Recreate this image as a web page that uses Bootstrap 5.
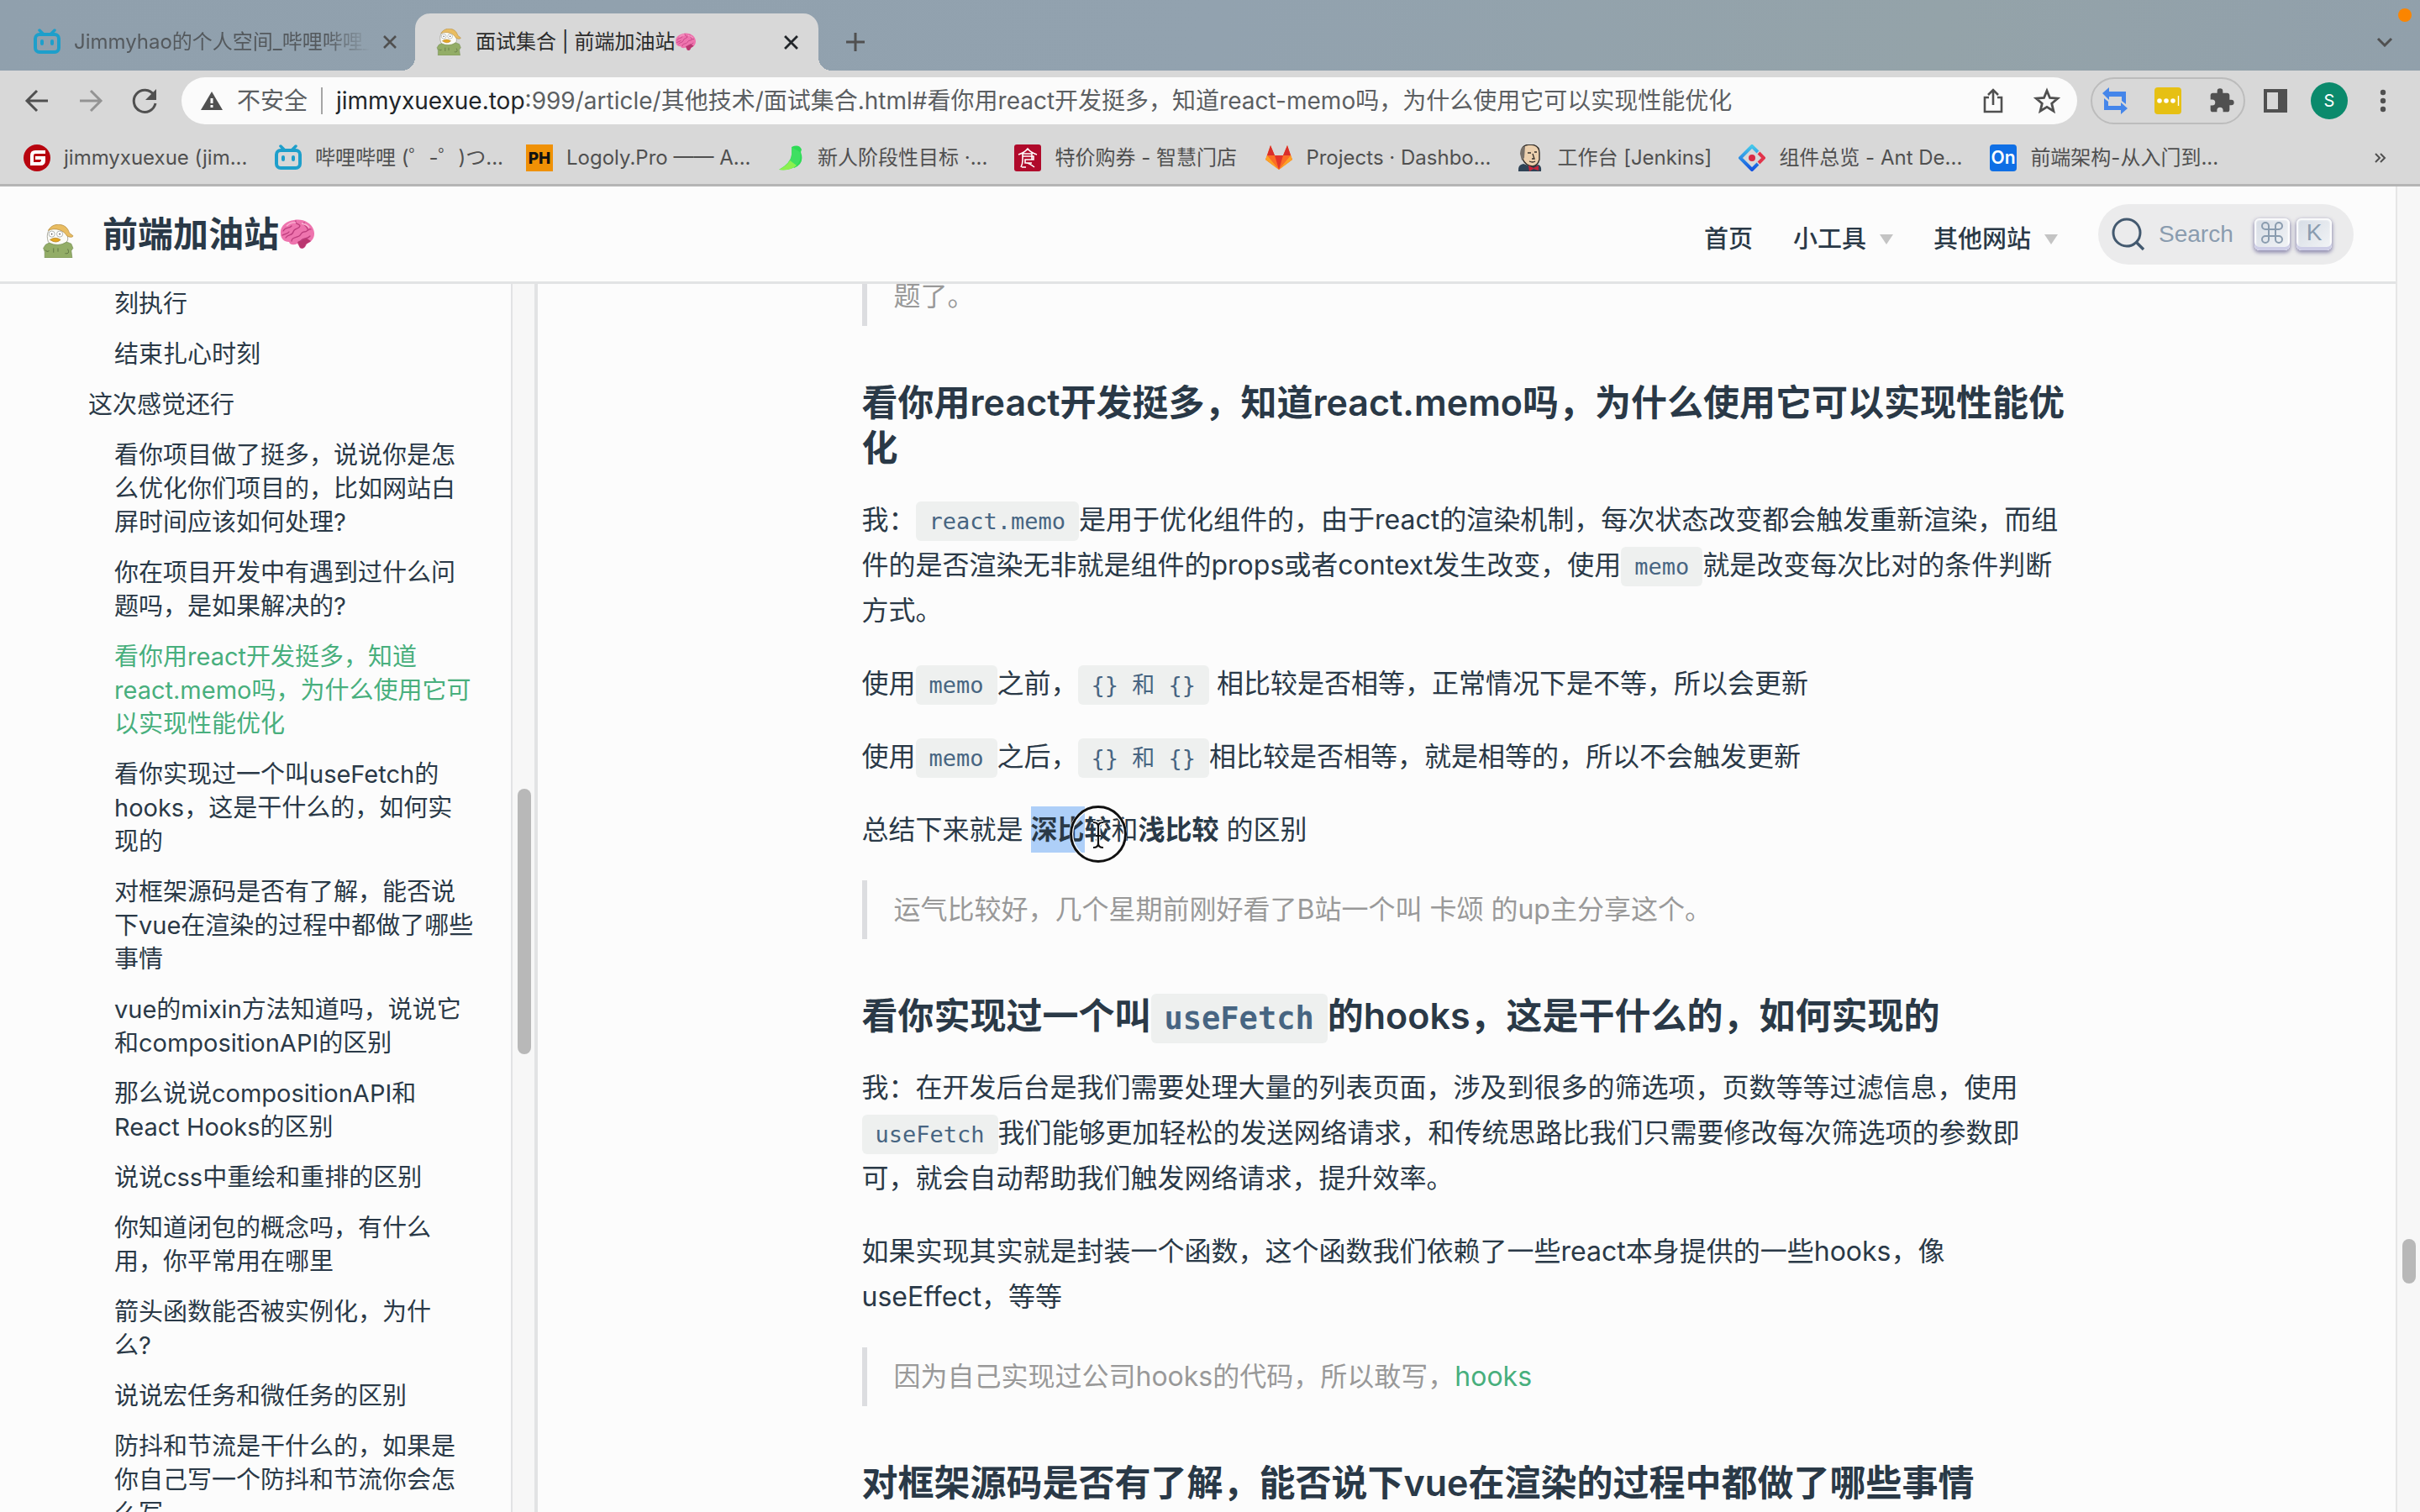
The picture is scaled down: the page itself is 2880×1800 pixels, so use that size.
<!DOCTYPE html>
<html lang="zh-CN">
<head>
<meta charset="utf-8">
<meta name="viewport" content="width=device-width, initial-scale=1">
<title>面试集合 | 前端加油站</title>
<link rel="stylesheet" href="https://cdn.jsdelivr.net/npm/bootstrap@5.3.0/dist/css/bootstrap.min.css">
<style>
  :root { --ink: #2a3947; --chrome: #d8d8d8; --glyph: #505050; --accent: #48af7d; --paper: #fcfcfc; --line: #e2e3e4; }
  body { font-family: Inter, "Noto Sans CJK SC", sans-serif; color: var(--ink); background: var(--paper); font-size: 32px; line-height: 54px; }
  svg { display: block; flex: none; }
  button { border: 0; background: none; padding: 0; color: var(--glyph); display: block; flex: none; }
  a { color: inherit; text-decoration: none; }

  /* tab strip */
  .strip { height: 84px; background: linear-gradient(100deg, #90a0ad, #92a2af 50%, #94a3a9 80%, #91a0ab); font-size: 24px; line-height: 32px; color: #54595d; position: relative; }
  .tab-item { height: 68px; }
  .tab-idle { width: 494px; padding: 0 22px 0 40px; }
  .tab-open { width: 480px; padding: 0 24px 0 24px; background: var(--chrome); color: #2b2b2b; border-radius: 18px 18px 0 0; position: relative; }
  .tab-open::before, .tab-open::after { content: ""; position: absolute; bottom: 0; width: 16px; height: 16px; }
  .tab-open::before { right: 100%; background: radial-gradient(circle at 0 0, transparent 16px, var(--chrome) 16px); }
  .tab-open::after { left: 100%; background: radial-gradient(circle at 100% 0, transparent 16px, var(--chrome) 16px); }
  .tab-name { overflow: hidden; white-space: nowrap; }
  .tab-fade { mask-image: linear-gradient(90deg, #000 85%, transparent); -webkit-mask-image: linear-gradient(90deg, #000 85%, transparent); }
  .rec-dot { position: absolute; right: 10px; top: 10px; width: 16px; height: 16px; background: #fb8500; border-radius: 50%; }

  /* toolbar */
  .toolbar { background: var(--chrome); padding: 8px 30px 8px 24px; color: var(--glyph); }
  .omnibox { height: 56px; border-radius: 28px; background: #fbfbfb; padding: 0 20px 0 22px; font-size: 28px; line-height: 36px; color: #5c5f62; }
  .omnibox input { border: 0; background: none; padding: 0; outline: 0; color: inherit; min-width: 0; }
  .omni-rule { width: 2px; height: 32px; background: #a5a5a5; }
  .ext-pill { height: 56px; width: 184px; border: 2px solid #bcbcbc; border-radius: 28px; padding: 0 10px 0 12px; margin-right: 22px; }
  .face { width: 44px; height: 44px; margin: 0 28px; border-radius: 50%; background: #0b8a6c; color: #fff; font-size: 20px; line-height: 44px; }
  .marks { background: var(--chrome); border-bottom: 3px solid #b5b5b5; padding: 16px 24px 15px 28px; font-size: 24px; line-height: 32px; color: #505050; }
  .marks li { white-space: nowrap; }
  .mark-wide { width: 267px; }

  /* site header */
  .site-head { height: 116px; border-bottom: 3px solid var(--line); padding: 0 50px 0 48px; }
  .site-name { font-size: 42px; line-height: 54px; font-weight: 600; }
  .nav-text { font-size: 29px; line-height: 40px; font-weight: 500; padding-top: 12px; }
  .caret-down { width: 0; height: 0; border: 8px solid transparent; border-top: 12px solid #c4c4c4; border-bottom: 0; }
  .finder { width: 304px; height: 72px; border-radius: 36px; background: #ebebec; padding: 0 24px 0 16px; }
  .finder input { width: 98px; border: 0; background: none; padding: 0; outline: 0; font: 28px/36px "Liberation Sans", sans-serif; }
  .finder input::placeholder { color: #8a9caf; opacity: 1; }
  .keycap { width: 42px; height: 38px; border-radius: 6px; background: linear-gradient(135deg, #d5dbe4, #f3f5f7); box-shadow: inset 0 -4px 0 #cdcde6, inset 0 0 2px 2px #fff, 0 2px 4px 1px rgba(90, 85, 140, .6); color: #8a9caf; font: 28px/34px "Liberation Sans", "DejaVu Sans", sans-serif; text-align: center; }

  /* sidebar */
  .side-list { width: 608px; padding: 4px 46px 0 136px; font-size: 29px; line-height: 40px; overflow: hidden; }
  .side-list ul { display: flex; flex-direction: column; gap: 20px; margin: 0; padding: 0; list-style: none; }
  .side-list .group-title { margin-left: -31px; }
  .side-list .current { color: var(--accent); }
  .side-list li { white-space: nowrap; }
  .track { position: relative; background: #f7f7f7; flex: none; }
  .track-side { width: 32px; border-left: 2px solid var(--line); border-right: 4px solid var(--line); }
  .track-page { width: 29px; border-left: 2px solid #e6e6e6; }
  .thumb { position: absolute; left: 6px; width: 16px; border-radius: 8px; background: #b8b8b8; }

  /* article */
  .column-main { overflow: hidden; }
  .article { max-width: 1440px; margin: -20px auto 0; white-space: nowrap; }
  .article p { margin: 0 0 33px; }
  .article h3 { font-size: 43px; line-height: 54px; font-weight: 600; margin: 64px 0 32px; }
  .article blockquote { margin: 0 0 32px; padding: 8px 0 8px 32px; border-left: 6px solid #dcdde0; color: #999; }
  .article blockquote a { color: var(--accent); }
  .article code { font-family: "DejaVu Sans Mono", "Noto Sans CJK SC", monospace; font-size: 27px; line-height: 1; padding: 8px 16px; background: #eef0ef; border-radius: 6px; color: #476582; }
  .article h3 code { font-size: 37px; }
  .picked { background: #aecff8; padding: 8px 0; }
  .pointer-anchor { position: relative; }
  .pointer-ring { position: absolute; left: -18px; top: -10px; }
</style>
</head>
<body class="vh-100 overflow-hidden d-flex flex-column">

<svg width="0" height="0" class="position-absolute" aria-hidden="true">
  <symbol id="duck" viewBox="0 0 34 38">
    <path d="M6 20C3 11 6 3 15 3s14 8 13 15c-3 7-18 8-22 2z" fill="#fbfbf6" stroke="#8e8e80" stroke-width=".7"/>
    <path d="M2 38V31L0.500 27 3 23 7 21q10 5 20-1l5 2 2 5-2 3 1 8z" fill="#93ad67" stroke="#6f8750" stroke-width=".6"/>
    <path d="M6 7C9 1 16-1 22 1c6 2 7 7 8 9l4 3c0 2-4 2-7 0C24 7 14 3 6 7z" fill="#e9bd62" stroke="#b28a3c" stroke-width=".7"/>
    <circle cx="10" cy="11" r="3.400" fill="#fff" stroke="#a3a8a6" stroke-width=".8"/><circle cx="19" cy="11" r="3.400" fill="#fff" stroke="#a3a8a6" stroke-width=".8"/>
    <circle cx="10" cy="11" r=".8" fill="#444"/><circle cx="19" cy="11" r=".8" fill="#444"/>
    <path d="M8 17.500q6-4 12 0-5 5-12 0z" fill="#e5a823" stroke="#a9761a" stroke-width=".6"/>
    <path d="M12 27v5m5-5v4m11-3q3 6-3 5M3 29q1 3 4 1" fill="none" stroke="#5f7443" stroke-width=".9"/>
  </symbol>
  <symbol id="brain" viewBox="0 0 42 36">
    <path d="M2 17C1 8 9 2 18 1c10-2 20 3 23 11 3 8-1 15-8 17-1 4-4 7-8 5l-3-5c-4 2-9 2-10-2C6 27 2 23 2 17z" fill="#ee74ae"/>
    <path d="M22 27l10-5 6 4-6 4c-1 4-4 6-7 4z" fill="#b9366f"/>
    <path d="M5 14c4-6 7-2 10-6M8 22c3-5 8-2 9-7s7-3 8-7M15 26c0-5 6-4 9-6s2-5 6-5 5-4 8-3M20 2c-2 4 5 3 5 6M30 4c-2 3 4 4 4 8M4 19c3-2 6-1 8-4M26 26c2-4 8-2 11-6" fill="none" stroke="#bd3d7d" stroke-width="1.300" stroke-linecap="round"/>
    <path d="M9 8q5-5 11-4M27 5q6 1 9 5" fill="none" stroke="#fbb3d3" stroke-width="1.400"/>
  </symbol>
  <symbol id="tv" viewBox="0 0 32 32">
    <path d="M7 2l5 5M25 2l-5 5" stroke="#1e9fcb" stroke-width="3.500" stroke-linecap="round"/>
    <rect x="2" y="7" width="28" height="21" rx="5" fill="none" stroke="#1e9fcb" stroke-width="4"/>
    <path d="M10 15v3M22 15v3" stroke="#1e9fcb" stroke-width="4" stroke-linecap="round"/>
  </symbol>
  <symbol id="cross" viewBox="0 0 16 16"><path d="M1 1l14 14M15 1L1 15" stroke="currentColor" stroke-width="2.600"/></symbol>
</svg>

<div class="strip d-flex align-items-end flex-shrink-0">
  <div class="tab-item tab-idle d-flex align-items-center">
    <svg width="32" height="32"><use href="#tv"/></svg>
    <span class="tab-name tab-fade flex-grow-1 ms-3 me-3">Jimmyhao的个人空间_哔哩哔哩_</span>
    <button type="button" aria-label="关闭标签页"><svg width="16" height="16"><use href="#cross"/></svg></button>
  </div>
  <div class="tab-item tab-open d-flex align-items-center">
    <svg width="32" height="32"><use href="#duck"/></svg>
    <span class="tab-name flex-grow-1 ms-3 d-flex align-items-center">面试集合 | 前端加油站<svg width="25" height="22"><use href="#brain"/></svg></span>
    <button type="button" aria-label="关闭标签页" class="text-dark"><svg width="17" height="17"><use href="#cross"/></svg></button>
  </div>
  <div class="tab-item d-flex align-items-center flex-grow-1 justify-content-between ps-4 pe-4">
    <button type="button" aria-label="新标签页" class="ms-2"><svg width="24" height="24" viewBox="0 0 24 24"><path d="M12 1v22M1 12h22" stroke="currentColor" stroke-width="3"/></svg></button>
    <button type="button" aria-label="搜索标签页" class="me-2"><svg width="20" height="12" viewBox="0 0 20 12"><path d="M2 2l8 8 8-8" fill="none" stroke="currentColor" stroke-width="3"/></svg></button>
  </div>
  <span class="rec-dot"></span>
</div>

<div class="toolbar d-flex align-items-center flex-shrink-0">
  <div class="d-flex align-items-center gap-4 pe-4">
    <button type="button" aria-label="后退"><svg width="40" height="40" viewBox="0 0 40 40"><path d="M33 20H9M20 8L8 20l12 12" fill="none" stroke="currentColor" stroke-width="3"/></svg></button>
    <button type="button" aria-label="前进" class="opacity-50"><svg width="40" height="40" viewBox="0 0 40 40"><path d="M7 20h24M20 8l12 12-12 12" fill="none" stroke="currentColor" stroke-width="3"/></svg></button>
    <button type="button" aria-label="重新加载"><svg width="40" height="40" viewBox="0 0 40 40"><path d="M31 13a13 13 0 1 0 2 10" fill="none" stroke="currentColor" stroke-width="3"/><path d="M34 6v13H21z" fill="currentColor"/></svg></button>
  </div>
  <div class="omnibox d-flex align-items-center flex-grow-1">
    <svg width="28" height="24" viewBox="0 0 28 24"><path d="M14 1l13 22H1z" fill="#505050"/><path d="M14 9v6M14 17v3" stroke="#fff" stroke-width="3"/></svg>
    <span class="ms-3">不安全</span>
    <span class="omni-rule mx-3"></span>
    <label for="address" class="text-dark">jimmyxuexue.top</label>
    <input id="address" class="flex-grow-1" type="text" value=":999/article/其他技术/面试集合.html#看你用react开发挺多，知道react-memo吗，为什么使用它可以实现性能优化">
    <button type="button" aria-label="分享"><svg width="32" height="32" viewBox="0 0 32 32"><path d="M11 12H6v17h20V12h-5M16 21V4M10 9l6-6 6 6" fill="none" stroke="currentColor" stroke-width="2.600"/></svg></button>
    <button type="button" aria-label="收藏" class="ms-4 ps-2"><svg width="32" height="32" viewBox="0 0 32 32"><path d="M16 4l3.500 8.500 9.200.7-7 6 2.200 9L16 23.400 8.100 28.200l2.200-9-7-6 9.200-.7z" fill="none" stroke="currentColor" stroke-width="2.800"/></svg></button>
  </div>
  <div class="ext-pill d-flex align-items-center justify-content-between ms-3">
    <button type="button" aria-label="同步扩展"><svg width="30" height="32" viewBox="0 0 30 32"><path d="M0 7l8-7v5h20v15l-5-4v-5H8v4zM30 25l-8 7v-5H2V13l5 4v5h15v-4z" fill="#4586ea"/></svg></button>
    <button type="button" aria-label="输入扩展"><svg width="32" height="32" viewBox="0 0 32 32"><rect width="32" height="32" rx="4" fill="#e6c013"/><circle cx="6" cy="16" r="2.800" fill="#fff"/><circle cx="14" cy="16" r="2.800" fill="#fff"/><circle cx="22" cy="16" r="2.800" fill="#fff"/><path d="M28.500 10v12" stroke="#fff" stroke-width="1.400"/></svg></button>
    <button type="button" aria-label="扩展程序"><svg width="32" height="32" viewBox="0 0 24 24"><path d="M20.500 11H19V7c0-1.100-.9-2-2-2h-4V3.500a2.500 2.500 0 0 0-5 0V5H4c-1.100 0-2 .9-2 2v3.800h1.500a2.700 2.700 0 0 1 0 5.400H2V20c0 1.100.9 2 2 2h3.800v-1.500a2.700 2.700 0 0 1 5.400 0V22H17c1.100 0 2-.9 2-2v-4h1.500a2.500 2.500 0 0 0 0-5z" fill="currentColor"/></svg></button>
  </div>
  <button type="button" aria-label="侧边栏"><svg width="28" height="28" viewBox="0 0 28 28"><path d="M0 0h28v28H0zM4 4v20h13V4z" fill="currentColor" fill-rule="evenodd"/></svg></button>
  <button type="button" aria-label="个人资料" class="face">S</button>
  <button type="button" aria-label="菜单" class="ms-2 me-2"><svg width="12" height="30" viewBox="0 0 12 30"><g fill="currentColor"><circle cx="6" cy="5" r="3.200"/><circle cx="6" cy="15" r="3.200"/><circle cx="6" cy="25" r="3.200"/></g></svg></button>
</div>

<nav class="marks d-flex align-items-center justify-content-between flex-shrink-0" aria-label="书签">
  <ul class="list-unstyled d-flex mb-0 gap-4 p-0">
    <li class="me-2"><a href="#" class="d-flex gap-3 mark-wide"><svg width="32" height="32" viewBox="0 0 32 32"><circle cx="16" cy="16" r="16" fill="#b8040f"/><path d="M26 7H14q-6 0-6 6v12h12q6 0 6-6v-5H14v4h7q0 3-2 3h-7v-8q0-2 2-2h12z" fill="#fff"/></svg>jimmyxuexue (jim...</a></li>
    <li class="me-2"><a href="#" class="d-flex gap-3 mark-wide"><svg width="32" height="32"><use href="#tv"/></svg>哔哩哔哩 (゜-゜)つ...</a></li>
    <li class="me-2"><a href="#" class="d-flex gap-3 mark-wide"><svg width="32" height="32" viewBox="0 0 32 32"><rect width="32" height="32" fill="#f09106"/><text x="16" y="23" font-size="19" font-weight="800" text-anchor="middle" fill="#111" font-family="Inter, sans-serif">PH</text></svg>Logoly.Pro —— A...</a></li>
    <li class="me-2"><a href="#" class="d-flex gap-3"><svg width="32" height="32" viewBox="0 0 32 32"><path d="M17 3q9-4 12 3l-1 3q5 14-8 19z" fill="#2ddb55"/><path d="M17 3v9Q16 22 2 30q14 1 20-4 8-8 5-17z" fill="#3fdf62"/><path d="M2 30q10-5 13-11l8 6q-8 7-21 5z" fill="#8df04e"/></svg>新人阶段性目标 ·...</a></li>
    <li class="me-2"><a href="#" class="d-flex gap-3 mark-wide"><svg width="32" height="32" viewBox="0 0 32 32"><rect width="32" height="32" rx="3" fill="#b00a2b"/><path d="M5 12q7-2 11-7 4 5 11 7M10 11h11v7M10 14h13v4H13v4h8M10 11v8q0 4-2 8M14 22q4 0 10 5M9 27h5" fill="none" stroke="#fff" stroke-width="1.600"/></svg>特价购券 - 智慧门店</a></li>
    <li class="me-2"><a href="#" class="d-flex gap-3 mark-wide"><svg width="32" height="32" viewBox="0 0 32 32"><path d="M16 30L0 18 6 1l5 12h10l5-12 6 17z" fill="#fb6d26"/><path d="M16 30L11 13h10z" fill="#e3342a"/><path d="M6 1l5 12H2zM26 1l-5 12h9z" fill="#d92e2b"/><path d="M2 13L0 18l16 12zM30 13l2 5-16 12z" fill="#fca326"/></svg>Projects · Dashbo...</a></li>
    <li class="me-2"><a href="#" class="d-flex gap-3"><svg width="32" height="32" viewBox="0 0 32 32"><path d="M2 32q-1-8 6-9l8 3 10-2q4 2 3 8z" fill="#2f4356"/><path d="M6 12Q4 1 15 0q12 0 12 10v8q-2 7-8 8-9-1-12-9z" fill="#ecd0ae" stroke="#332e29" stroke-width="1.400"/><path d="M4 11Q4 3 10 2l-1 14-3 3z" fill="#777069"/><path d="M13 10h4M21 9h3M19 11l2 6h-3M15 20q4 2 7 0" fill="none" stroke="#332e29" stroke-width="1.300"/><path d="M14 25l6 3 6-3v6l-6-2-5 3z" fill="#c8253a"/></svg>工作台 [Jenkins]</a></li>
    <li class="me-2"><a href="#" class="d-flex gap-3 mark-wide"><svg width="32" height="32" viewBox="0 0 32 32"><defs><linearGradient id="ant" x2="0" y2="1"><stop stop-color="#45c8ea"/><stop offset="1" stop-color="#1454e0"/></linearGradient></defs><path d="M23 9l-7-7L2 16l14 14 7-7" fill="none" stroke="url(#ant)" stroke-width="4"/><path d="M24 10l6 6-6 6" fill="none" stroke="#e2344b" stroke-width="4"/><circle cx="16" cy="16" r="4" fill="#d92a45"/></svg>组件总览 - Ant De...</a></li>
    <li><a href="#" class="d-flex gap-3 mark-wide"><svg width="32" height="32" viewBox="0 0 32 32"><rect width="32" height="32" rx="4" fill="#0f6fe5"/><text x="16" y="23" font-size="21" font-weight="600" text-anchor="middle" fill="#fff" font-family="Inter, sans-serif">On</text></svg>前端架构-从入门到...</a></li>
  </ul>
  <button type="button" aria-label="更多书签" class="me-3"><svg width="14" height="12" viewBox="0 0 14 12"><path d="M1 1l5 5-5 5M7 1l5 5-5 5" fill="none" stroke="currentColor" stroke-width="2"/></svg></button>
</nav>

<div class="d-flex flex-grow-1 overflow-hidden">
  <div class="d-flex flex-column flex-grow-1 overflow-hidden">
    <header class="site-head d-flex align-items-center flex-shrink-0">
      <a href="#" class="d-flex align-items-center">
        <svg width="42" height="40" class="mt-3"><use href="#duck"/></svg>
        <span class="site-name d-flex align-items-center ps-3 ms-3">前端加油站<svg width="42" height="36"><use href="#brain"/></svg></span>
      </a>
      <nav class="nav-text d-flex align-items-center ms-auto gap-5 me-5">
        <a href="#">首页</a>
        <a href="#" class="d-flex align-items-center gap-3">小工具<span class="caret-down"></span></a>
        <a href="#" class="d-flex align-items-center gap-3">其他网站<span class="caret-down"></span></a>
      </nav>
      <div class="finder d-flex align-items-center">
        <label for="site-search"><svg width="40" height="40" viewBox="0 0 40 40"><circle cx="18" cy="18" r="16" fill="none" stroke="#43596f" stroke-width="3"/><path d="M29 29l9 9" stroke="#43596f" stroke-width="3.400"/></svg></label>
        <input id="site-search" type="text" placeholder="Search" class="ms-3 me-3">
        <kbd class="keycap p-0 me-2"><svg width="42" height="34" viewBox="0 0 42 34"><path d="M17 13h8v8h-8zM17 13h-4a4 4 0 1 1 4-4zM25 13V9a4 4 0 1 1 4 4zM25 21h4a4 4 0 1 1-4 4zM17 21v4a4 4 0 1 1-4-4z" fill="none" stroke="#8a9caf" stroke-width="2"/></svg></kbd><kbd class="keycap p-0">K</kbd>
      </div>
    </header>

    <div class="d-flex flex-grow-1 overflow-hidden">
      <aside class="side-list flex-shrink-0">
        <ul>
          <li><a href="#">刻执行</a></li>
          <li><a href="#">结束扎心时刻</a></li>
          <li class="group-title"><a href="#">这次感觉还行</a></li>
          <li><a href="#">看你项目做了挺多，说说你是怎<br>么优化你们项目的，比如网站白<br>屏时间应该如何处理?</a></li>
          <li><a href="#">你在项目开发中有遇到过什么问<br>题吗，是如果解决的?</a></li>
          <li><a href="#" class="current">看你用react开发挺多，知道<br>react.memo吗，为什么使用它可<br>以实现性能优化</a></li>
          <li><a href="#">看你实现过一个叫useFetch的<br>hooks，这是干什么的，如何实<br>现的</a></li>
          <li><a href="#">对框架源码是否有了解，能否说<br>下vue在渲染的过程中都做了哪些<br>事情</a></li>
          <li><a href="#">vue的mixin方法知道吗，说说它<br>和compositionAPI的区别</a></li>
          <li><a href="#">那么说说compositionAPI和<br>React Hooks的区别</a></li>
          <li><a href="#">说说css中重绘和重排的区别</a></li>
          <li><a href="#">你知道闭包的概念吗，有什么<br>用，你平常用在哪里</a></li>
          <li><a href="#">箭头函数能否被实例化，为什<br>么?</a></li>
          <li><a href="#">说说宏任务和微任务的区别</a></li>
          <li><a href="#">防抖和节流是干什么的，如果是<br>你自己写一个防抖和节流你会怎<br>么写</a></li>
        </ul>
      </aside>
      <div class="track track-side"><span class="thumb" style="top:601px;height:316px"></span></div>

      <main class="column-main flex-grow-1">
        <article class="article">
          <blockquote>题了。</blockquote>

          <h3>看你用react开发挺多，知道react.memo吗，为什么使用它可以实现性能优<br>化</h3>
          <p>我：<code>react.memo</code>是用于优化组件的，由于react的渲染机制，每次状态改变都会触发重新渲染，而组<br>件的是否渲染无非就是组件的props或者context发生改变，使用<code>memo</code>就是改变每次比对的条件判断<br>方式。</p>
          <p>使用<code>memo</code>之前，<code>{} 和 {}</code> 相比较是否相等，正常情况下是不等，所以会更新</p>
          <p>使用<code>memo</code>之后，<code>{} 和 {}</code>相比较是否相等，就是相等的，所以不会触发更新</p>
          <p>总结下来就是 <strong><span class="picked">深比</span><span class="pointer-anchor">较<svg class="pointer-ring" width="68" height="70" viewBox="0 0 68 70"><circle cx="34" cy="35" r="32" fill="none" stroke="#fff" stroke-width="4.500"/><circle cx="34" cy="35" r="32.500" fill="none" stroke="#111" stroke-width="3"/><path d="M28 21q6 0 6 5v20q0 5-6 5M40 21q-6 0-6 5M34 46q0 5 6 5M31 37h6" fill="none" stroke="#fff" stroke-width="5"/><path d="M28 21q6 0 6 5v20q0 5-6 5M40 21q-6 0-6 5M34 46q0 5 6 5M31 37h6" fill="none" stroke="#111" stroke-width="2.200"/></svg></span></strong>和<strong>浅比较</strong> 的区别</p>
          <blockquote>运气比较好，几个星期前刚好看了B站一个叫 卡颂 的up主分享这个。</blockquote>

          <h3>看你实现过一个叫<code>useFetch</code>的hooks，这是干什么的，如何实现的</h3>
          <p>我：在开发后台是我们需要处理大量的列表页面，涉及到很多的筛选项，页数等等过滤信息，使用<br><code>useFetch</code>我们能够更加轻松的发送网络请求，和传统思路比我们只需要修改每次筛选项的参数即<br>可，就会自动帮助我们触发网络请求，提升效率。</p>
          <p>如果实现其实就是封装一个函数，这个函数我们依赖了一些react本身提供的一些hooks，像<br>useEffect，等等</p>
          <blockquote>因为自己实现过公司hooks的代码，所以敢写，<a href="#">hooks</a></blockquote>

          <h3>对框架源码是否有了解，能否说下vue在渲染的过程中都做了哪些事情</h3>
        </article>
      </main>
    </div>
  </div>
  <div class="track track-page"><span class="thumb" style="top:1253px;height:53px"></span></div>
</div>

<script src="https://cdn.jsdelivr.net/npm/bootstrap@5.3.0/dist/js/bootstrap.bundle.min.js"></script>
</body>
</html>
